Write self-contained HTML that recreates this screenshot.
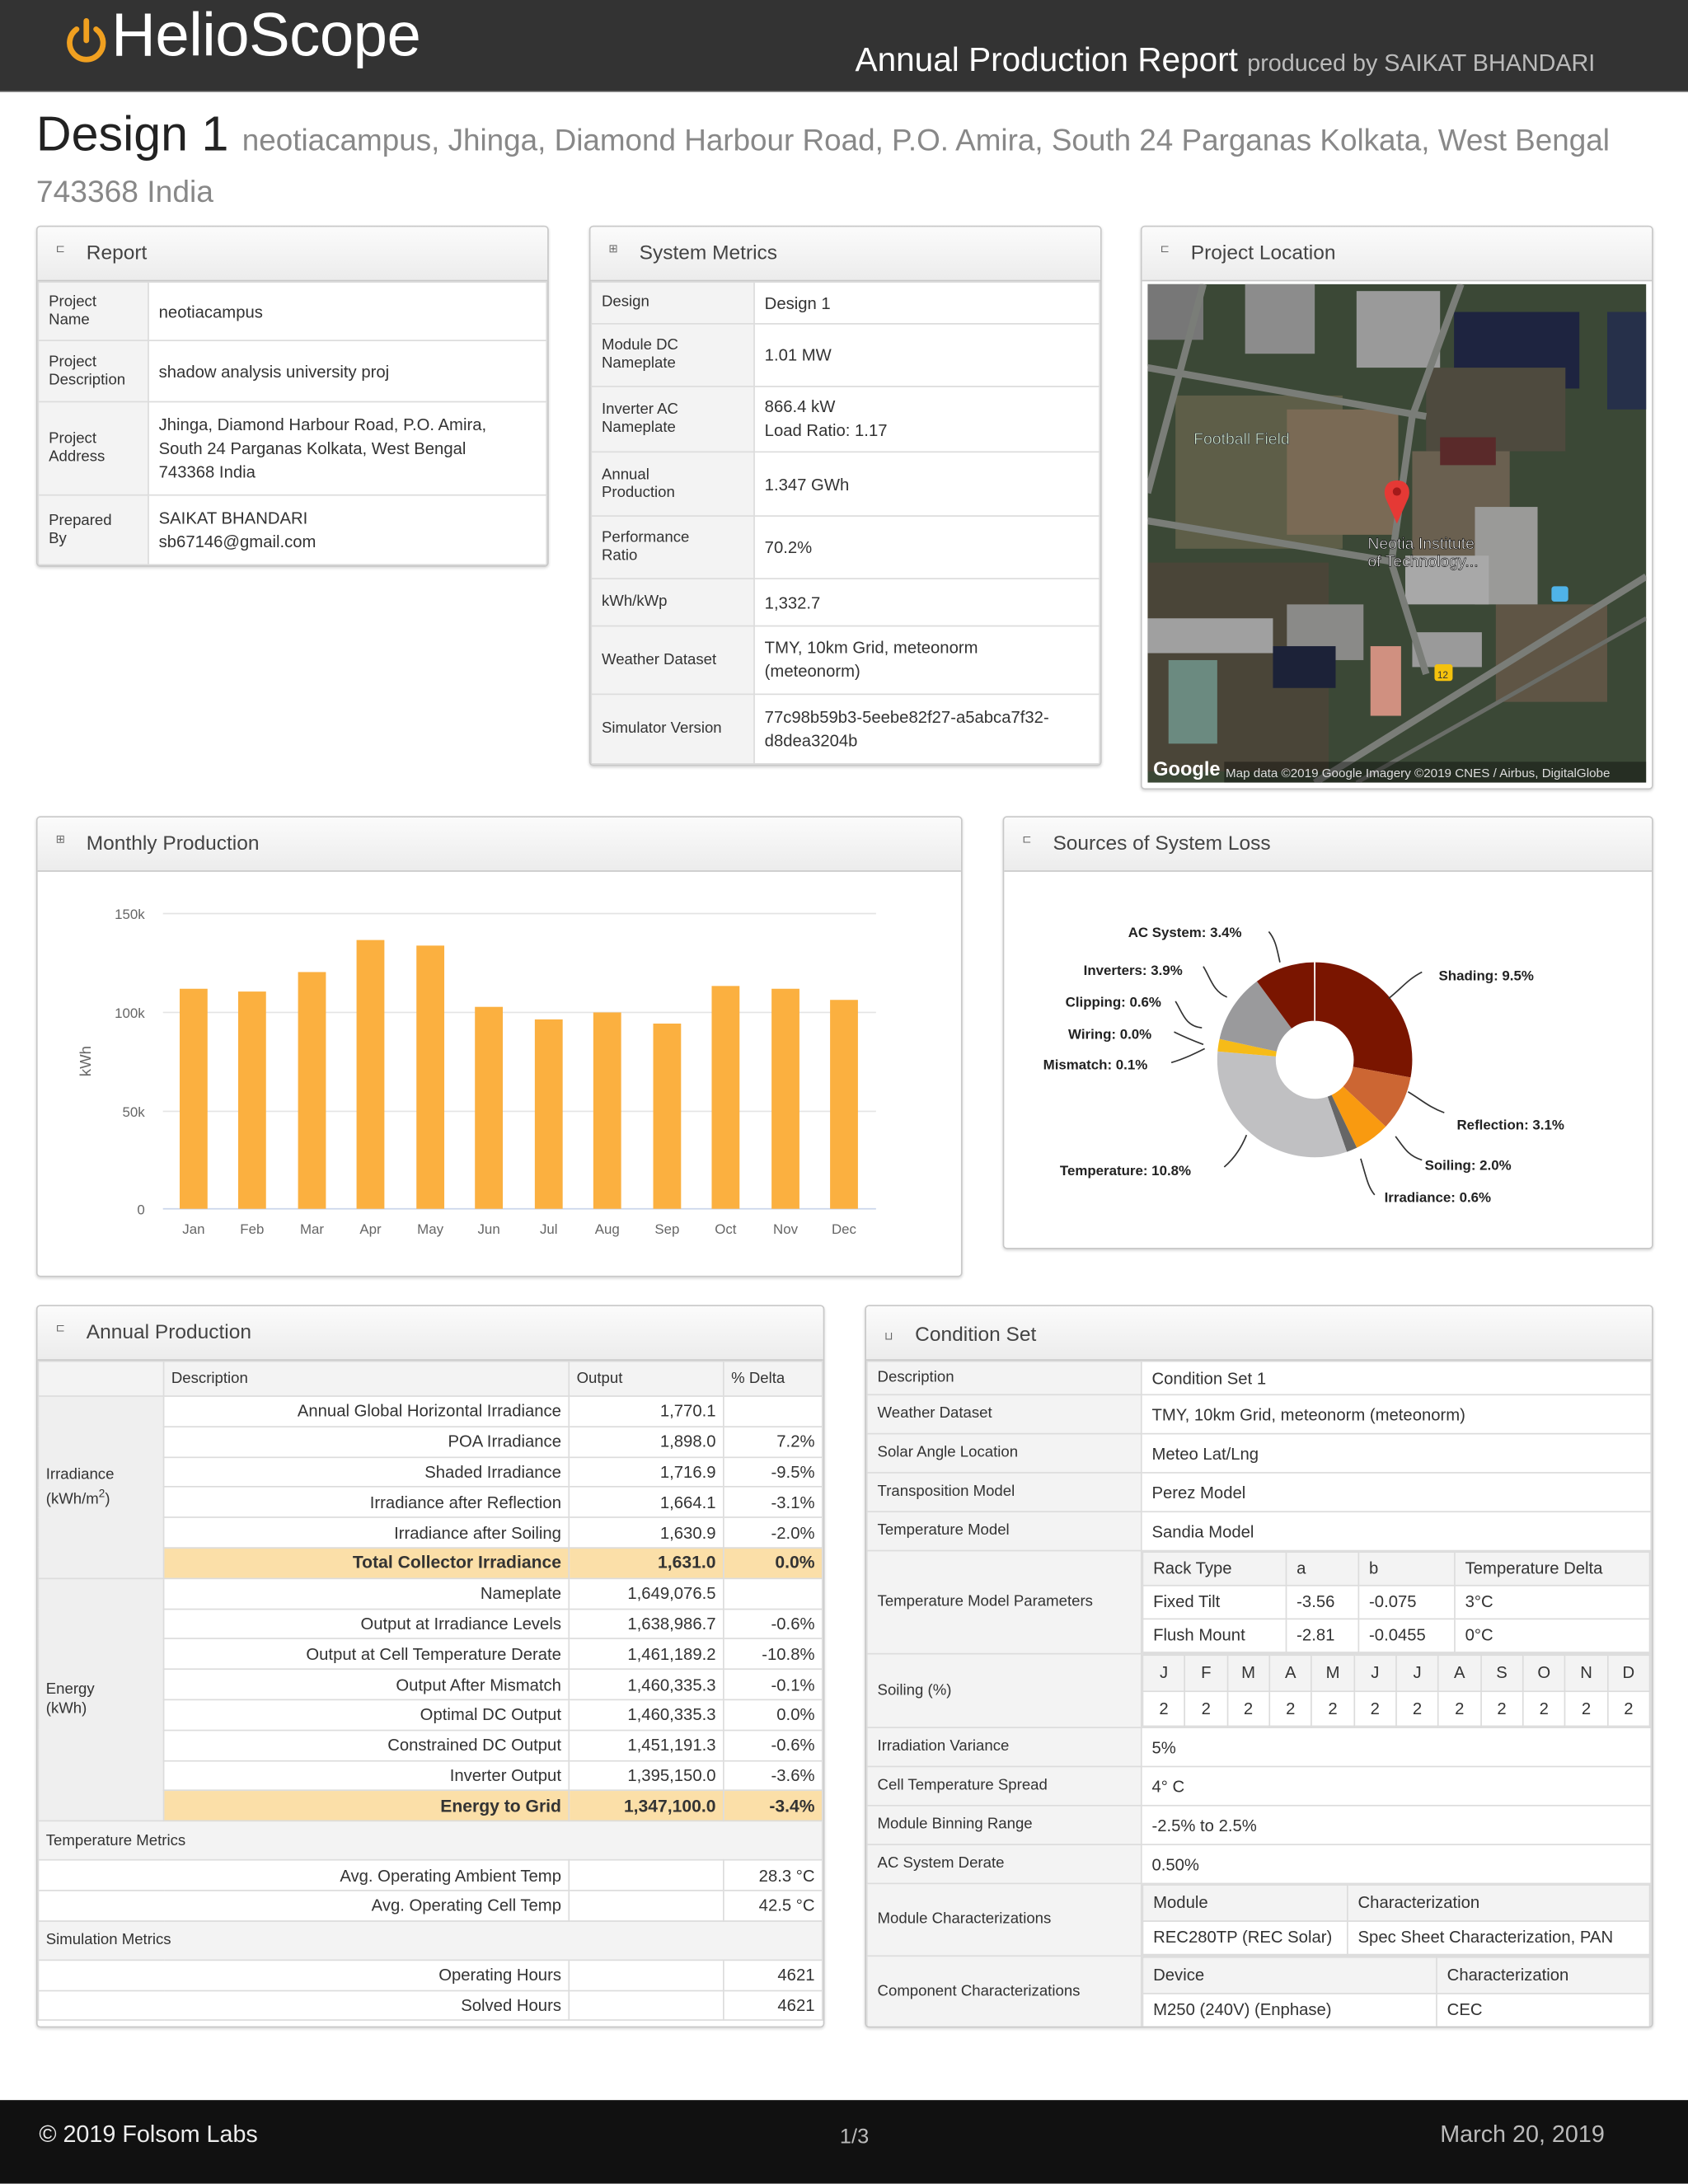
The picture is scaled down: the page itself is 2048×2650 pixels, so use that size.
<!DOCTYPE html>
<html><head><meta charset="utf-8">
<style>
*{box-sizing:border-box;margin:0;padding:0}
html,body{width:2048px;height:2650px;overflow:hidden;background:#fff}
#w{position:absolute;left:0;top:0;width:1212px;height:1568px;transform:scale(1.68977);transform-origin:0 0;font-family:"Liberation Sans",sans-serif;color:#333}
.abs{position:absolute}
.panel{position:absolute;border:1px solid #c8c8c8;border-radius:3px;background:#fff;box-shadow:0 1px 2px rgba(0,0,0,.15);overflow:hidden}
.ph{height:39px;background:linear-gradient(#fbfbfb,#ececec);border-bottom:1px solid #c8c8c8;font-size:14.5px;color:#444;line-height:39px;padding-left:35px;position:relative}
.ph i{position:absolute;left:13px;top:-4px;font-style:normal;font-size:8px;color:#666}
table{border-collapse:collapse;table-layout:fixed;width:100%}
td{border:1px solid #dcdcdc;font-size:12px;color:#333;vertical-align:middle;line-height:14px}
td.l{background:#f3f3f3;font-size:11px;padding-left:7px;color:#333;line-height:13px}
td.v{padding-left:7px}
.ap td{height:21.8px;font-size:12px;padding:0 5px;text-align:right}
.ap td.g{background:#efefef;text-align:left;font-size:11px}
.ap tr.h td{background:#fbdfa8;font-weight:bold;font-size:12.5px}
.ap tr.hd td{background:#f3f3f3;text-align:left;font-size:11px}
.ap tr.sec td{background:#f3f3f3;text-align:left;font-size:11px;height:24px}
.cs td{height:28px}
.sub td{border:1px solid #dcdcdc;font-size:12px;padding-left:7px;height:24px;line-height:13px}
.sub tr.sh td{background:#f3f3f3}
.sub td.c{text-align:center;padding:0}
.pl{font-size:10px;font-weight:bold;fill:#222;font-family:"Liberation Sans",sans-serif}
</style></head><body><div id="w">

<div class="abs" style="left:0;top:0;width:1212px;height:66px;background:#333;border-bottom:1px solid #555"></div>
<svg class="abs" style="left:46px;top:12px" width="32" height="34" viewBox="0 0 32 34"><path d="M9 9 A12 12 0 1 0 23 9" fill="none" stroke="#f0a020" stroke-width="4" stroke-linecap="round"/><line x1="16" y1="3" x2="16" y2="17" stroke="#f0a020" stroke-width="4" stroke-linecap="round"/></svg>
<div class="abs" style="left:80px;top:1px;font-size:44px;color:#fff;letter-spacing:-0.3px">HelioScope</div>
<div class="abs" style="left:614px;top:30px;font-size:24px;color:#fff;white-space:nowrap">Annual Production Report <span style="font-size:17px;color:#bbb">produced by SAIKAT BHANDARI</span></div>

<div class="abs" style="left:26px;top:77px;font-size:35px;color:#222;white-space:nowrap">Design 1 <span style="font-size:21.8px;color:#888">neotiacampus, Jhinga, Diamond Harbour Road, P.O. Amira, South 24 Parganas Kolkata, West Bengal</span></div>
<div class="abs" style="left:26px;top:125px;font-size:22px;color:#888">743368 India</div>

<!-- Report -->
<div class="panel" style="left:26px;top:162px;width:368px;height:245px">
<div class="ph"><i>⊏</i>Report</div>
<table><col style="width:79px"><col>
<tr><td class="l" style="height:42px">Project<br>Name</td><td class="v">neotiacampus</td></tr>
<tr><td class="l" style="height:44px">Project<br>Description</td><td class="v">shadow analysis university proj</td></tr>
<tr><td class="l" style="height:67px">Project<br>Address</td><td class="v" style="line-height:17px">Jhinga, Diamond Harbour Road, P.O. Amira,<br>South 24 Parganas Kolkata, West Bengal<br>743368 India</td></tr>
<tr><td class="l" style="height:50px">Prepared<br>By</td><td class="v" style="line-height:17px">SAIKAT BHANDARI<br>sb67146@gmail.com</td></tr>
</table></div>

<!-- System Metrics -->
<div class="panel" style="left:423px;top:162px;width:368px;height:388px">
<div class="ph"><i>⊞</i>System Metrics</div>
<table><col style="width:117px"><col>
<tr><td class="l" style="height:30px">Design</td><td class="v">Design 1</td></tr>
<tr><td class="l" style="height:45px">Module DC<br>Nameplate</td><td class="v">1.01 MW</td></tr>
<tr><td class="l" style="height:47px">Inverter AC<br>Nameplate</td><td class="v" style="line-height:17px">866.4 kW<br>Load Ratio: 1.17</td></tr>
<tr><td class="l" style="height:46px">Annual<br>Production</td><td class="v">1.347 GWh</td></tr>
<tr><td class="l" style="height:45px">Performance<br>Ratio</td><td class="v">70.2%</td></tr>
<tr><td class="l" style="height:34px">kWh/kWp</td><td class="v">1,332.7</td></tr>
<tr><td class="l" style="height:49px">Weather Dataset</td><td class="v" style="line-height:17px">TMY, 10km Grid, meteonorm<br>(meteonorm)</td></tr>
<tr><td class="l" style="height:50px">Simulator Version</td><td class="v" style="line-height:17px">77c98b59b3-5eebe82f27-a5abca7f32-<br>d8dea3204b</td></tr>
</table></div>

<!-- Project Location -->
<div class="panel" style="left:819px;top:162px;width:368px;height:405px">
<div class="ph"><i>⊏</i>Project Location</div>
<svg class="abs" style="left:4px;top:41px" width="358" height="358" viewBox="0 0 358 358">
<rect width="358" height="358" fill="#3b4836"/>
<rect x="20" y="80" width="120" height="110" fill="#5e5e48"/>
<rect x="100" y="90" width="80" height="90" fill="#7a6a55"/>
<rect x="190" y="120" width="70" height="90" fill="#6a6050"/>
<rect x="220" y="20" width="90" height="55" fill="#1e2440"/>
<rect x="200" y="60" width="100" height="60" fill="#4e4a3e"/>
<rect x="210" y="110" width="40" height="20" fill="#5a2a2a"/>
<rect x="0" y="200" width="130" height="150" fill="#4a4538"/>
<rect x="15" y="270" width="35" height="60" fill="#6b8a80"/>
<rect x="250" y="230" width="80" height="70" fill="#5f5545"/>
<rect x="330" y="20" width="28" height="70" fill="#26304a"/>
<rect x="150" y="5" width="60" height="55" fill="#9a9a9a"/>
<rect x="70" y="0" width="50" height="50" fill="#8c8c8c"/>
<rect x="0" y="0" width="40" height="40" fill="#777"/>
<rect x="235" y="160" width="45" height="70" fill="#9a9a98"/>
<rect x="100" y="230" width="55" height="40" fill="#8a8a88"/>
<rect x="0" y="240" width="90" height="25" fill="#a0a0a0"/>
<rect x="185" y="195" width="60" height="35" fill="#a8a8a8"/>
<rect x="190" y="250" width="50" height="25" fill="#9a9a9a"/>
<rect x="160" y="260" width="22" height="50" fill="#d09080"/>
<rect x="90" y="260" width="45" height="30" fill="#1c2238"/>
<path d="M0 60 L200 95 M190 95 L225 0 M190 95 L175 200 L200 280 M0 170 L180 200 M40 0 L0 150 M120 358 L358 210" stroke="#7a7d78" stroke-width="5" fill="none"/>
<path d="M150 358 L358 240" stroke="#6a6d68" stroke-width="3" fill="none"/>
<text x="33" y="115" font-size="11.5" fill="#cfe8c8" stroke="#223" stroke-width=".3" font-family="Liberation Sans">Football Field</text>
<path d="M179 141 C170 141 169 149 171 154 L179 172 L187 154 C189 149 188 141 179 141Z" fill="#e53935"/>
<circle cx="179" cy="149" r="3" fill="#a31a1a"/>
<text x="158" y="190" font-size="11.5" fill="#fff" stroke="#111" stroke-width=".4" font-family="Liberation Sans">Neotia Institute</text>
<text x="158" y="203" font-size="11.5" fill="#fff" stroke="#111" stroke-width=".4" font-family="Liberation Sans">of Technology...</text>
<rect x="290" y="217" width="12" height="11" rx="2" fill="#4fb3e8"/>
<rect x="206" y="273" width="13" height="12" rx="2" fill="#f4c20d"/>
<text x="208" y="283" font-size="7" fill="#333" font-family="Liberation Sans">12</text>
<rect x="55" y="343" width="303" height="15" fill="rgba(0,0,0,.35)"/>
<text x="4" y="353" font-size="14" font-weight="bold" fill="#fff" font-family="Liberation Sans">Google</text>
<text x="56" y="354" font-size="9" fill="#ddd" font-family="Liberation Sans">Map data ©2019 Google  Imagery ©2019 CNES / Airbus, DigitalGlobe</text>
</svg>
</div>

<!-- Monthly Production -->
<div class="panel" style="left:26px;top:586px;width:665px;height:331px">
<div class="ph"><i>⊞</i>Monthly Production</div>
<svg class="abs" style="left:0;top:40px" width="665" height="290">
<g stroke="#e4e4e4" stroke-width="1"><line x1="90" y1="29" x2="602" y2="29"/><line x1="90" y1="100" x2="602" y2="100"/><line x1="90" y1="171" x2="602" y2="171"/></g>
<line x1="90" y1="241" x2="602" y2="241" stroke="#ccd6eb"/>
<g font-size="10" fill="#666" font-family="Liberation Sans" text-anchor="end"><text x="77" y="33">150k</text><text x="77" y="104">100k</text><text x="77" y="175">50k</text><text x="77" y="245">0</text></g>
<text x="38" y="135" font-size="11" fill="#666" font-family="Liberation Sans" transform="rotate(-90 38 135)" text-anchor="middle">kWh</text>
<g fill="#fbb040">
<rect x="102" y="83" width="20" height="158"/><rect x="144" y="85" width="20" height="156"/><rect x="187" y="71" width="20" height="170"/><rect x="229" y="48" width="20" height="193"/><rect x="272" y="52" width="20" height="189"/><rect x="314" y="96" width="20" height="145"/><rect x="357" y="105" width="20" height="136"/><rect x="399" y="100" width="20" height="141"/><rect x="442" y="108" width="20" height="133"/><rect x="484" y="81" width="20" height="160"/><rect x="527" y="83" width="20" height="158"/><rect x="569" y="91" width="20" height="150"/>
</g>
<g font-size="10" fill="#666" font-family="Liberation Sans" text-anchor="middle"><text x="112" y="259">Jan</text><text x="154" y="259">Feb</text><text x="197" y="259">Mar</text><text x="239" y="259">Apr</text><text x="282" y="259">May</text><text x="324" y="259">Jun</text><text x="367" y="259">Jul</text><text x="409" y="259">Aug</text><text x="452" y="259">Sep</text><text x="494" y="259">Oct</text><text x="537" y="259">Nov</text><text x="579" y="259">Dec</text></g>
</svg>
</div>

<!-- Sources of System Loss -->
<div class="panel" style="left:720px;top:586px;width:467px;height:311px">
<div class="ph"><i>⊏</i>Sources of System Loss</div>
<svg class="abs" style="left:0;top:40px" width="467" height="270">
<g transform="translate(223,134) rotate(-90)" fill="none" stroke-width="42">
<circle r="49" pathLength="340" stroke="#7a1500" stroke-dasharray="95 340" stroke-dashoffset="0"/>
<circle r="49" pathLength="340" stroke="#cc6633" stroke-dasharray="31 340" stroke-dashoffset="-95"/>
<circle r="49" pathLength="340" stroke="#f99a10" stroke-dasharray="20 340" stroke-dashoffset="-126"/>
<circle r="49" pathLength="340" stroke="#666" stroke-dasharray="6 340" stroke-dashoffset="-146"/>
<circle r="49" pathLength="340" stroke="#c0c0c2" stroke-dasharray="108 340" stroke-dashoffset="-152"/>
<circle r="49" pathLength="340" stroke="#f6bb18" stroke-dasharray="7 340" stroke-dashoffset="-260"/>
<circle r="49" pathLength="340" stroke="#9a9a9c" stroke-dasharray="39 340" stroke-dashoffset="-267"/>
<circle r="49" pathLength="340" stroke="#7a1500" stroke-dasharray="34 340" stroke-dashoffset="-306"/>
</g>
<g stroke="#fff" stroke-width="1"><line x1="223" y1="64" x2="223" y2="106"/></g>
<g stroke="#333" fill="none" stroke-width="1">
<path d="M190 42 C195 48 196 55 198 64"/><path d="M143 67 C148 75 150 85 160 89"/><path d="M123 92 C128 100 130 110 142 111"/><path d="M122 114 C130 118 135 120 143 123"/><path d="M120 136 C130 133 138 129 144 126"/><path d="M300 71 C290 76 285 83 276 90"/><path d="M316 172 C305 168 300 163 290 157"/><path d="M300 206 C290 203 287 197 281 189"/><path d="M266 231 C261 225 260 218 256 205"/><path d="M158 211 C165 205 170 198 174 188"/>
</g>
<text class="pl" x="89" y="46">AC System: 3.4%</text>
<text class="pl" x="57" y="73">Inverters: 3.9%</text>
<text class="pl" x="44" y="96">Clipping: 0.6%</text>
<text class="pl" x="46" y="119">Wiring: 0.0%</text>
<text class="pl" x="28" y="141">Mismatch: 0.1%</text>
<text class="pl" x="312" y="77">Shading: 9.5%</text>
<text class="pl" x="325" y="184">Reflection: 3.1%</text>
<text class="pl" x="302" y="213">Soiling: 2.0%</text>
<text class="pl" x="273" y="236">Irradiance: 0.6%</text>
<text class="pl" x="40" y="217">Temperature: 10.8%</text>
</svg>
</div>

<!-- Annual Production -->
<div class="panel" style="left:26px;top:937px;width:566px;height:519px">
<div class="ph"><i>⊏</i>Annual Production</div>
<table class="ap"><col style="width:90px"><col style="width:291px"><col style="width:111px"><col>
<tr class="hd"><td style="height:25px"></td><td>Description</td><td>Output</td><td>% Delta</td></tr>
<tr><td class="g" rowspan="6">Irradiance<br>(kWh/m<sup style="font-size:8px">2</sup>)</td><td>Annual Global Horizontal Irradiance</td><td>1,770.1</td><td></td></tr>
<tr><td>POA Irradiance</td><td>1,898.0</td><td>7.2%</td></tr>
<tr><td>Shaded Irradiance</td><td>1,716.9</td><td>-9.5%</td></tr>
<tr><td>Irradiance after Reflection</td><td>1,664.1</td><td>-3.1%</td></tr>
<tr><td>Irradiance after Soiling</td><td>1,630.9</td><td>-2.0%</td></tr>
<tr class="h"><td>Total Collector Irradiance</td><td>1,631.0</td><td>0.0%</td></tr>
<tr><td class="g" rowspan="8" style="background:#efefef;font-weight:normal">Energy<br>(kWh)</td><td>Nameplate</td><td>1,649,076.5</td><td></td></tr>
<tr><td>Output at Irradiance Levels</td><td>1,638,986.7</td><td>-0.6%</td></tr>
<tr><td>Output at Cell Temperature Derate</td><td>1,461,189.2</td><td>-10.8%</td></tr>
<tr><td>Output After Mismatch</td><td>1,460,335.3</td><td>-0.1%</td></tr>
<tr><td>Optimal DC Output</td><td>1,460,335.3</td><td>0.0%</td></tr>
<tr><td>Constrained DC Output</td><td>1,451,191.3</td><td>-0.6%</td></tr>
<tr><td>Inverter Output</td><td>1,395,150.0</td><td>-3.6%</td></tr>
<tr class="h"><td>Energy to Grid</td><td>1,347,100.0</td><td>-3.4%</td></tr>
<tr class="sec"><td colspan="4" style="height:28px">Temperature Metrics</td></tr>
<tr><td colspan="2">Avg. Operating Ambient Temp</td><td></td><td>28.3 °C</td></tr>
<tr><td colspan="2">Avg. Operating Cell Temp</td><td></td><td>42.5 °C</td></tr>
<tr class="sec"><td colspan="4" style="height:28px">Simulation Metrics</td></tr>
<tr><td colspan="2">Operating Hours</td><td></td><td>4621</td></tr>
<tr><td colspan="2">Solved Hours</td><td></td><td>4621</td></tr>
</table></div>

<!-- Condition Set -->
<div class="panel" style="left:621px;top:937px;width:566px;height:519px">
<div class="ph" style="line-height:42px"><i style="top:1px">⊔</i>Condition Set</div>
<table class="cs"><col style="width:197px"><col>
<tr><td class="l" style="height:24px">Description</td><td class="v" style="height:24px">Condition Set 1</td></tr>
<tr><td class="l">Weather Dataset</td><td class="v">TMY, 10km Grid, meteonorm (meteonorm)</td></tr>
<tr><td class="l">Solar Angle Location</td><td class="v">Meteo Lat/Lng</td></tr>
<tr><td class="l">Transposition Model</td><td class="v">Perez Model</td></tr>
<tr><td class="l">Temperature Model</td><td class="v">Sandia Model</td></tr>
<tr><td class="l" style="height:72px">Temperature Model Parameters</td><td style="padding:0;height:72px"><table class="sub"><col style="width:103px"><col style="width:52px"><col style="width:69px"><col>
<tr class="sh"><td>Rack Type</td><td>a</td><td>b</td><td>Temperature Delta</td></tr>
<tr><td style="height:23px">Fixed Tilt</td><td>-3.56</td><td>-0.075</td><td>3°C</td></tr>
<tr><td style="height:23px">Flush Mount</td><td>-2.81</td><td>-0.0455</td><td>0°C</td></tr></table></td></tr>
<tr><td class="l" style="height:52px">Soiling (%)</td><td style="padding:0;height:52px"><table class="sub">
<tr class="sh"><td class="c" style="height:26px">J</td><td class="c">F</td><td class="c">M</td><td class="c">A</td><td class="c">M</td><td class="c">J</td><td class="c">J</td><td class="c">A</td><td class="c">S</td><td class="c">O</td><td class="c">N</td><td class="c">D</td></tr>
<tr><td class="c" style="height:25px">2</td><td class="c">2</td><td class="c">2</td><td class="c">2</td><td class="c">2</td><td class="c">2</td><td class="c">2</td><td class="c">2</td><td class="c">2</td><td class="c">2</td><td class="c">2</td><td class="c">2</td></tr></table></td></tr>
<tr><td class="l">Irradiation Variance</td><td class="v">5%</td></tr>
<tr><td class="l">Cell Temperature Spread</td><td class="v">4° C</td></tr>
<tr><td class="l">Module Binning Range</td><td class="v">-2.5% to 2.5%</td></tr>
<tr><td class="l">AC System Derate</td><td class="v">0.50%</td></tr>
<tr><td class="l" style="height:51px">Module Characterizations</td><td style="padding:0;height:51px"><table class="sub"><col style="width:147px"><col>
<tr class="sh"><td style="height:26px">Module</td><td>Characterization</td></tr>
<tr><td style="height:24px">REC280TP (REC Solar)</td><td>Spec Sheet Characterization, PAN</td></tr></table></td></tr>
<tr><td class="l" style="height:51px">Component Characterizations</td><td style="padding:0;height:51px"><table class="sub"><col style="width:211px"><col>
<tr class="sh"><td style="height:26px">Device</td><td>Characterization</td></tr>
<tr><td style="height:24px">M250 (240V) (Enphase)</td><td>CEC</td></tr></table></td></tr>
</table></div>

<div class="abs" style="left:0;top:1508px;width:1212px;height:60px;background:#111"></div>
<div class="abs" style="left:28px;top:1523px;font-size:17px;color:#eee">© 2019 Folsom Labs</div>
<div class="abs" style="left:603px;top:1526px;font-size:15px;color:#bbb">1/3</div>
<div class="abs" style="left:1034px;top:1523px;font-size:17px;color:#bbb">March 20, 2019</div>
</div></body></html>
